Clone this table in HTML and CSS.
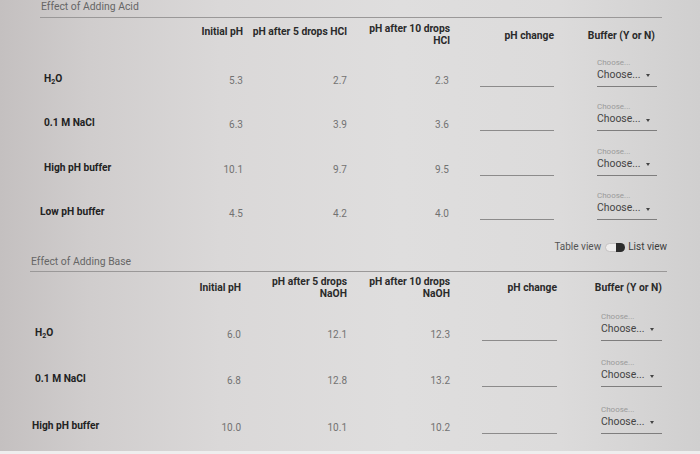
FILE: index.html
```html
<!DOCTYPE html>
<html lang="en">
<head>
<meta charset="utf-8">
<title>Buffer lab</title>
<link rel="stylesheet" href="styles.css">
</head>
<body>
<section class="sec acid">
  <div class="sec-title">Effect of Adding Acid</div>
  <div class="grid">
    <div class="hd"></div>
    <div class="hd num up">Initial pH</div>
    <div class="hd num up">pH after 5 drops HCl</div>
    <div class="hd num">pH after 10 drops<br>HCl</div>
    <div class="hd num low">pH change</div>
    <div class="hd buf low">Buffer (Y or N)</div>

    <div class="row">
      <div class="lbl">H<sub>2</sub>O</div>
      <div class="val">5.3</div>
      <div class="val">2.7</div>
      <div class="val v10">2.3</div>
      <div class="chg"><div class="line"></div></div>
      <div class="bufc"><div class="dd"><div class="dd-s">Choose...</div><div class="dd-m">Choose...<span class="arr"></span></div></div></div>
    </div>
    <div class="row">
      <div class="lbl">0.1 M NaCl</div>
      <div class="val">6.3</div>
      <div class="val">3.9</div>
      <div class="val v10">3.6</div>
      <div class="chg"><div class="line"></div></div>
      <div class="bufc"><div class="dd"><div class="dd-s">Choose...</div><div class="dd-m">Choose...<span class="arr"></span></div></div></div>
    </div>
    <div class="row">
      <div class="lbl">High pH buffer</div>
      <div class="val">10.1</div>
      <div class="val">9.7</div>
      <div class="val v10">9.5</div>
      <div class="chg"><div class="line"></div></div>
      <div class="bufc"><div class="dd"><div class="dd-s">Choose...</div><div class="dd-m">Choose...<span class="arr"></span></div></div></div>
    </div>
    <div class="row">
      <div class="lbl lbl-low">Low pH buffer</div>
      <div class="val">4.5</div>
      <div class="val">4.2</div>
      <div class="val v10">4.0</div>
      <div class="chg"><div class="line"></div></div>
      <div class="bufc"><div class="dd"><div class="dd-s">Choose...</div><div class="dd-m">Choose...<span class="arr"></span></div></div></div>
    </div>
  </div>
</section>

<div class="toggle-row">
  <span class="t-table">Table view</span>
  <span class="switch"><span class="knob"></span></span>
  <span class="t-list">List view</span>
</div>

<section class="sec base">
  <div class="sec-title">Effect of Adding Base</div>
  <div class="grid">
    <div class="hd"></div>
    <div class="hd num">Initial pH</div>
    <div class="hd num">pH after 5 drops<br>NaOH</div>
    <div class="hd num">pH after 10 drops<br>NaOH</div>
    <div class="hd num">pH change</div>
    <div class="hd buf">Buffer (Y or N)</div>

    <div class="row">
      <div class="lbl">H<sub>2</sub>O</div>
      <div class="val">6.0</div>
      <div class="val">12.1</div>
      <div class="val">12.3</div>
      <div class="chg"><div class="line"></div></div>
      <div class="bufc"><div class="dd"><div class="dd-s">Choose...</div><div class="dd-m">Choose...<span class="arr"></span></div></div></div>
    </div>
    <div class="row">
      <div class="lbl">0.1 M NaCl</div>
      <div class="val">6.8</div>
      <div class="val">12.8</div>
      <div class="val">13.2</div>
      <div class="chg"><div class="line"></div></div>
      <div class="bufc"><div class="dd"><div class="dd-s">Choose...</div><div class="dd-m">Choose...<span class="arr"></span></div></div></div>
    </div>
    <div class="row">
      <div class="lbl lbl-low">High pH buffer</div>
      <div class="val">10.0</div>
      <div class="val">10.1</div>
      <div class="val">10.2</div>
      <div class="chg"><div class="line"></div></div>
      <div class="bufc"><div class="dd"><div class="dd-s">Choose...</div><div class="dd-m">Choose...<span class="arr"></span></div></div></div>
    </div>
  </div>
</section>
</body>
</html>
```

FILE: styles.css
```css
html, body {
  margin: 0;
  padding: 0;
}
body {
  width: 700px;
  height: 454px;
  overflow: hidden;
  font-family: Roboto, "Liberation Sans", Arial, sans-serif;
  color: #222;
  background:
    linear-gradient(to bottom, rgba(255,255,255,0) 451px, #eeeeee 451px),
    linear-gradient(to right, #c4c0c0 0px, #d0cdcd 90px, #dad8d8 220px, #dfdede 400px, #dcdbdb 560px, #d0cfcf 700px);
}

.sec-title {
  font-size: 10.4px;
  line-height: 14px;
  color: #666;
  padding-bottom: 3px;
  border-bottom: 1px solid #9a9898;
  padding-left: 1px;
}

.grid {
  display: grid;
}
.row {
  display: contents;
}

/* acid section */
.acid {
  margin-left: 40px;
  width: 622px;
}
.acid .grid {
  grid-template-columns: 160px 43px 104px 103px 104px 108px;
  grid-template-rows: 34px repeat(4, 44.5px);
}
.acid .lbl { padding-left: 4px; }
.acid .lbl-low { padding-left: 0; }
.acid .buf { padding-right: 7px; }
.acid .bufc { padding-left: 43px; }
.acid .dd { width: 60px; }
.acid .line { width: 74px; }

/* base section */
.base {
  margin-left: 30px;
  width: 637px;
}
.base .sec-title {
  padding-bottom: 2px;
}
.base .grid {
  grid-template-columns: 166px 45px 106px 103px 107px 110px;
  grid-template-rows: 32px repeat(3, 46.5px);
}
.base .lbl { padding-left: 5px; }
.base .lbl-low { padding-left: 2px; }
.base .buf { padding-right: 5px; }
.base .bufc { padding-left: 44px; }
.base .dd { width: 61px; }
.base .line { width: 75px; }

/* header cells */
.hd {
  font-size: 10.3px;
  font-weight: 700;
  line-height: 12px;
  color: #2a2a2a;
  align-self: center;
  white-space: nowrap;
}
.hd.num { text-align: right; }
.hd.buf { text-align: right; }
.acid .hd.up { margin-bottom: 6px; }
.acid .hd.low { margin-top: 2px; }

/* row cells */
.lbl, .val, .chg, .bufc {
  align-self: end;
  margin-bottom: 10px;
}
.lbl {
  font-size: 10.2px;
  font-weight: 700;
  line-height: 12px;
  color: #222;
  white-space: nowrap;
  margin-bottom: 12px;
}
.lbl sub {
  font-size: 7px;
  line-height: 0;
  vertical-align: -2px;
}
.val {
  font-size: 10px;
  line-height: 12px;
  color: #727272;
  text-align: right;
}
.acid .v10 { padding-right: 1px; }
.chg {
  display: flex;
  justify-content: flex-end;
}
.line {
  height: 16px;
  border-bottom: 1px solid #8c8b8b;
}

/* dropdown */
.dd {
  border-bottom: 1px solid #7e7d7d;
}
.dd-s {
  font-size: 8px;
  line-height: 10px;
  color: #9a9a9a;
}
.dd-m {
  display: flex;
  align-items: center;
  font-size: 10.4px;
  line-height: 12px;
  color: #444;
  padding-bottom: 5px;
  margin-top: 1px;
}
.arr {
  width: 0;
  height: 0;
  margin-left: 6px;
  margin-top: 2px;
  border-left: 2.5px solid transparent;
  border-right: 2.5px solid transparent;
  border-top: 3px solid #444;
}

/* toggle */
.toggle-row {
  display: flex;
  align-items: center;
  justify-content: flex-end;
  width: 667px;
  height: 14px;
  margin-top: 10px;
  margin-bottom: 1px;
  font-size: 10px;
  line-height: 14px;
}
.t-table {
  color: #555;
}
.t-list {
  color: #3c3c3c;
  margin-left: 3px;
}
.switch {
  position: relative;
  width: 20px;
  height: 9px;
  margin-left: 4px;
  border-radius: 5px;
  background: #eeeded;
  border: 1px solid #c4c2c2;
  box-sizing: border-box;
}
.knob {
  position: absolute;
  right: -1px;
  top: -1px;
  width: 9px;
  height: 9px;
  border-radius: 0 5px 5px 0;
  background: #2c2c2c;
}
```
